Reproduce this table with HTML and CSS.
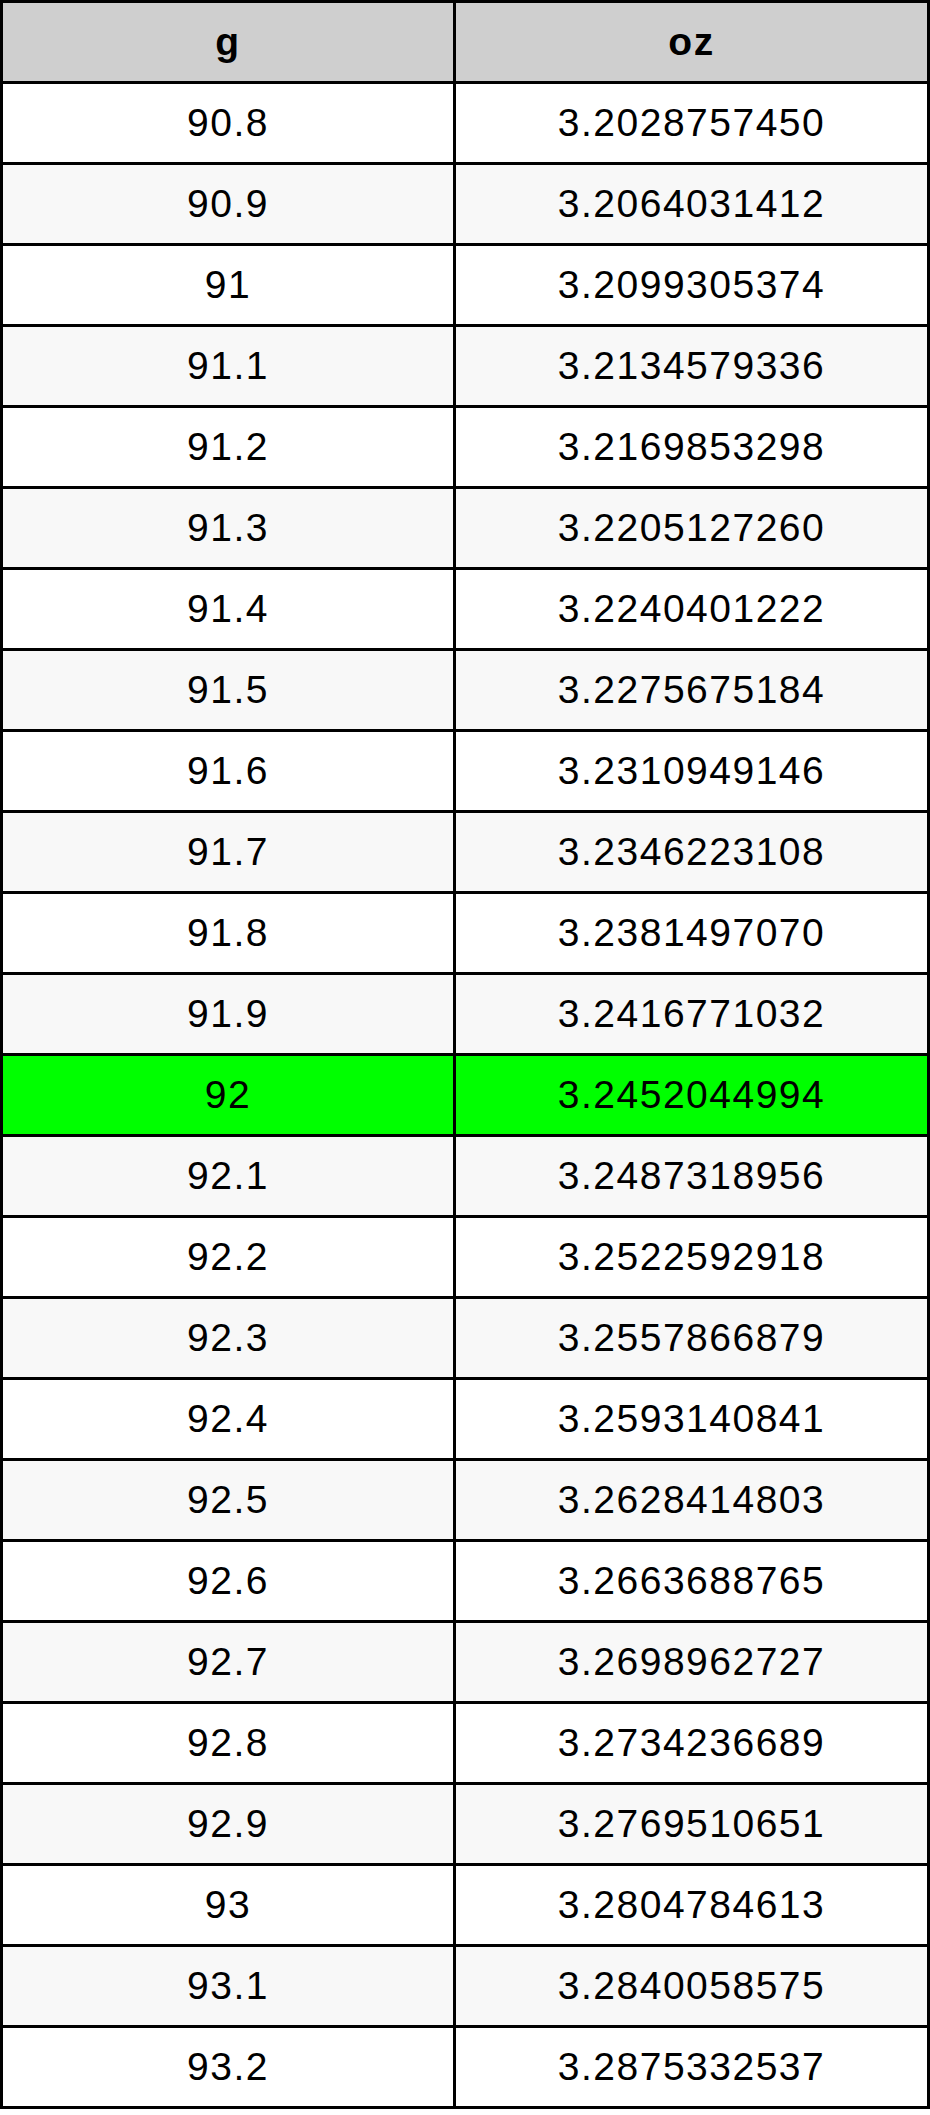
FILE: index.html
```html
<!DOCTYPE html>
<html>
<head>
<meta charset="utf-8">
<link rel="stylesheet" href="styles.css">
</head>
<body>
<table class="conv">
<thead>
<tr><th class="c1">g</th><th>oz</th></tr>
</thead>
<tbody>
<tr><td class="c1">90.8</td><td>3.2028757450</td></tr>
<tr class="alt"><td class="c1">90.9</td><td>3.2064031412</td></tr>
<tr><td class="c1">91</td><td>3.2099305374</td></tr>
<tr class="alt"><td class="c1">91.1</td><td>3.2134579336</td></tr>
<tr><td class="c1">91.2</td><td>3.2169853298</td></tr>
<tr class="alt"><td class="c1">91.3</td><td>3.2205127260</td></tr>
<tr><td class="c1">91.4</td><td>3.2240401222</td></tr>
<tr class="alt"><td class="c1">91.5</td><td>3.2275675184</td></tr>
<tr><td class="c1">91.6</td><td>3.2310949146</td></tr>
<tr class="alt"><td class="c1">91.7</td><td>3.2346223108</td></tr>
<tr><td class="c1">91.8</td><td>3.2381497070</td></tr>
<tr class="alt"><td class="c1">91.9</td><td>3.2416771032</td></tr>
<tr class="hl"><td class="c1">92</td><td>3.2452044994</td></tr>
<tr class="alt"><td class="c1">92.1</td><td>3.2487318956</td></tr>
<tr><td class="c1">92.2</td><td>3.2522592918</td></tr>
<tr class="alt"><td class="c1">92.3</td><td>3.2557866879</td></tr>
<tr><td class="c1">92.4</td><td>3.2593140841</td></tr>
<tr class="alt"><td class="c1">92.5</td><td>3.2628414803</td></tr>
<tr><td class="c1">92.6</td><td>3.2663688765</td></tr>
<tr class="alt"><td class="c1">92.7</td><td>3.2698962727</td></tr>
<tr><td class="c1">92.8</td><td>3.2734236689</td></tr>
<tr class="alt"><td class="c1">92.9</td><td>3.2769510651</td></tr>
<tr><td class="c1">93</td><td>3.2804784613</td></tr>
<tr class="alt"><td class="c1">93.1</td><td>3.2840058575</td></tr>
<tr><td class="c1">93.2</td><td>3.2875332537</td></tr>
</tbody>
</table>
</body>
</html>
```
FILE: styles.css
```css
html, body {
  margin: 0;
  padding: 0;
  background: #ffffff;
}

.conv {
  width: 930px;
  border-collapse: separate;
  border-spacing: 0;
  table-layout: fixed;
  border-left: 3px solid #000;
  border-top: 3px solid #000;
  font-family: "Liberation Sans", Arial, sans-serif;
  font-size: 39px;
  letter-spacing: 1.5px;
  color: #000;
}

.conv th,
.conv td {
  padding: 0;
  line-height: 78px;
  text-align: center;
  border-right: 3px solid #000;
  border-bottom: 3px solid #000;
  box-sizing: border-box;
  white-space: nowrap;
}

.conv .c1 {
  width: 453px;
}

.conv th {
  background: #cfcfcf;
  font-weight: bold;
}

.conv td {
  background: #ffffff;
  font-weight: normal;
}

.conv tr.alt td {
  background: #f8f8f8;
}

.conv tr.hl td {
  background: #00ff00;
}
```
